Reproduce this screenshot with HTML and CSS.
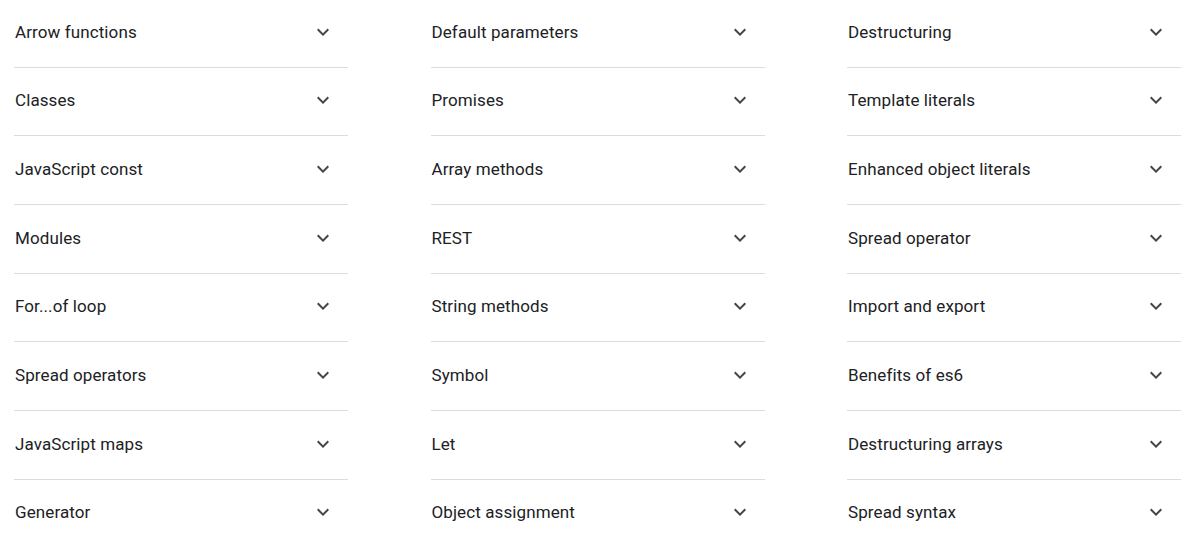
FILE: index.html
```html
<!DOCTYPE html>
<html>
<head>
<meta charset="utf-8">
<link rel="stylesheet" href="styles.css">
</head>
<body>
<div class="grid">
  <div class="col">
    <div class="item"><span>Arrow functions</span><svg viewBox="0 0 24 24"><path d="M16.59 8.59L12 13.17 7.41 8.59 6 10l6 6 6-6z"/></svg></div>
    <div class="item"><span>Classes</span><svg viewBox="0 0 24 24"><path d="M16.59 8.59L12 13.17 7.41 8.59 6 10l6 6 6-6z"/></svg></div>
    <div class="item"><span>JavaScript const</span><svg viewBox="0 0 24 24"><path d="M16.59 8.59L12 13.17 7.41 8.59 6 10l6 6 6-6z"/></svg></div>
    <div class="item"><span>Modules</span><svg viewBox="0 0 24 24"><path d="M16.59 8.59L12 13.17 7.41 8.59 6 10l6 6 6-6z"/></svg></div>
    <div class="item"><span>For...of loop</span><svg viewBox="0 0 24 24"><path d="M16.59 8.59L12 13.17 7.41 8.59 6 10l6 6 6-6z"/></svg></div>
    <div class="item"><span>Spread operators</span><svg viewBox="0 0 24 24"><path d="M16.59 8.59L12 13.17 7.41 8.59 6 10l6 6 6-6z"/></svg></div>
    <div class="item"><span>JavaScript maps</span><svg viewBox="0 0 24 24"><path d="M16.59 8.59L12 13.17 7.41 8.59 6 10l6 6 6-6z"/></svg></div>
    <div class="item"><span>Generator</span><svg viewBox="0 0 24 24"><path d="M16.59 8.59L12 13.17 7.41 8.59 6 10l6 6 6-6z"/></svg></div>
  </div>
  <div class="col">
    <div class="item"><span>Default parameters</span><svg viewBox="0 0 24 24"><path d="M16.59 8.59L12 13.17 7.41 8.59 6 10l6 6 6-6z"/></svg></div>
    <div class="item"><span>Promises</span><svg viewBox="0 0 24 24"><path d="M16.59 8.59L12 13.17 7.41 8.59 6 10l6 6 6-6z"/></svg></div>
    <div class="item"><span>Array methods</span><svg viewBox="0 0 24 24"><path d="M16.59 8.59L12 13.17 7.41 8.59 6 10l6 6 6-6z"/></svg></div>
    <div class="item"><span>REST</span><svg viewBox="0 0 24 24"><path d="M16.59 8.59L12 13.17 7.41 8.59 6 10l6 6 6-6z"/></svg></div>
    <div class="item"><span>String methods</span><svg viewBox="0 0 24 24"><path d="M16.59 8.59L12 13.17 7.41 8.59 6 10l6 6 6-6z"/></svg></div>
    <div class="item"><span>Symbol</span><svg viewBox="0 0 24 24"><path d="M16.59 8.59L12 13.17 7.41 8.59 6 10l6 6 6-6z"/></svg></div>
    <div class="item"><span>Let</span><svg viewBox="0 0 24 24"><path d="M16.59 8.59L12 13.17 7.41 8.59 6 10l6 6 6-6z"/></svg></div>
    <div class="item"><span>Object assignment</span><svg viewBox="0 0 24 24"><path d="M16.59 8.59L12 13.17 7.41 8.59 6 10l6 6 6-6z"/></svg></div>
  </div>
  <div class="col">
    <div class="item"><span>Destructuring</span><svg viewBox="0 0 24 24"><path d="M16.59 8.59L12 13.17 7.41 8.59 6 10l6 6 6-6z"/></svg></div>
    <div class="item"><span>Template literals</span><svg viewBox="0 0 24 24"><path d="M16.59 8.59L12 13.17 7.41 8.59 6 10l6 6 6-6z"/></svg></div>
    <div class="item"><span>Enhanced object literals</span><svg viewBox="0 0 24 24"><path d="M16.59 8.59L12 13.17 7.41 8.59 6 10l6 6 6-6z"/></svg></div>
    <div class="item"><span>Spread operator</span><svg viewBox="0 0 24 24"><path d="M16.59 8.59L12 13.17 7.41 8.59 6 10l6 6 6-6z"/></svg></div>
    <div class="item"><span>Import and export</span><svg viewBox="0 0 24 24"><path d="M16.59 8.59L12 13.17 7.41 8.59 6 10l6 6 6-6z"/></svg></div>
    <div class="item"><span>Benefits of es6</span><svg viewBox="0 0 24 24"><path d="M16.59 8.59L12 13.17 7.41 8.59 6 10l6 6 6-6z"/></svg></div>
    <div class="item"><span>Destructuring arrays</span><svg viewBox="0 0 24 24"><path d="M16.59 8.59L12 13.17 7.41 8.59 6 10l6 6 6-6z"/></svg></div>
    <div class="item"><span>Spread syntax</span><svg viewBox="0 0 24 24"><path d="M16.59 8.59L12 13.17 7.41 8.59 6 10l6 6 6-6z"/></svg></div>
  </div>
</div>
</body>
</html>
```
FILE: styles.css
```css
html, body {
  margin: 0;
  padding: 0;
  background: #fff;
}
body {
  font-family: Roboto, "Noto Sans", Arial, sans-serif;
  color: #202124;
  overflow: hidden;
}
.grid {
  display: grid;
  grid-template-columns: 334px 334px 334px;
  column-gap: 82.5px;
  padding: 0 19px 0 14px;
  margin-top: -1px;
}
.col {
  display: flex;
  flex-direction: column;
}
.item {
  box-sizing: border-box;
  display: flex;
  align-items: center;
  justify-content: space-between;
  height: 68.67px;
  border-bottom: 1px solid #dadce0;
  padding: 0 13px 2px 1px;
  font-size: 17px;
  letter-spacing: 0.1px;
}
.item svg {
  width: 24px;
  height: 24px;
  fill: #444746;
  flex: none;
}
```
